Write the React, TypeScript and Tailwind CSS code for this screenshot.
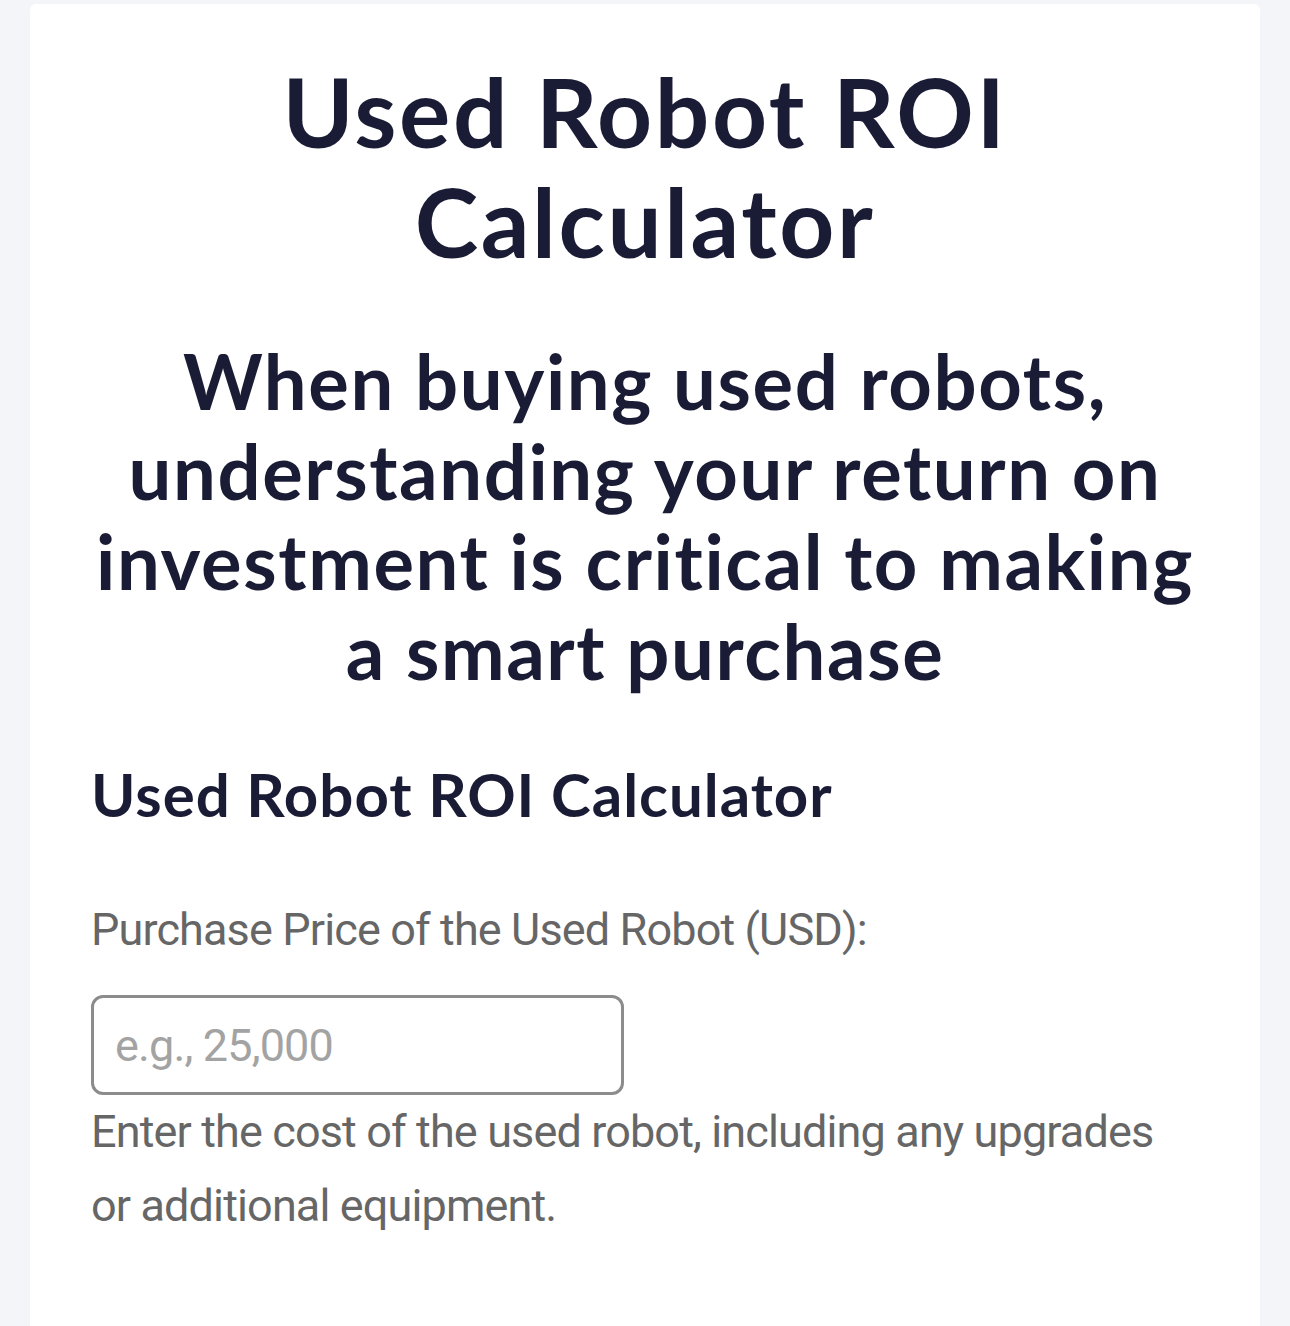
export default function App() {
  return (
    <div className="min-h-[1326px] w-full bg-[#f4f5f9] pt-[4px]">
      <div className="mx-[30px] flex min-h-[1322px] flex-col rounded-t-[6px] bg-white px-[61px] pt-[52px]">
        <h1 className="text-center font-['Lato',sans-serif] text-[96px] font-bold leading-[110px] tracking-[2.6px] text-[#1a1c35]">
          Used Robot ROI
          <br />
          Calculator
        </h1>
        <h2 className="mt-[60px] text-center font-['Lato',sans-serif] text-[76px] font-bold leading-[90px] tracking-[1.6px] text-[#1a1c35]">
          When buying used robots, understanding your return on investment is critical to making a smart purchase
        </h2>
        <h3 className="mt-[62px] font-['Lato',sans-serif] text-[60px] font-bold leading-[72px] tracking-[1px] text-[#1a1c35]">
          Used Robot ROI Calculator
        </h3>
        <div className="mt-[63px] flex flex-col items-start font-['Roboto',sans-serif]">
          <label className="text-[45px] leading-[74px] tracking-[-0.87px] text-[#666666]">
            Purchase Price of the Used Robot (USD):
          </label>
          <input
            type="text"
            placeholder="e.g., 25,000"
            className="mt-[28px] h-[100px] w-[533px] rounded-[12px] border-[3px] border-[#8c8c8c] bg-white px-[21px] font-['Roboto',sans-serif] text-[45px] tracking-[-0.85px] text-[#333333] outline-none placeholder:text-[#a3a3a3]"
          />
          <p className="text-[45px] leading-[74px] tracking-[-0.87px] text-[#666666]">
            Enter the cost of the used robot, including any upgrades or additional equipment.
          </p>
        </div>
      </div>
    </div>
  );
}
